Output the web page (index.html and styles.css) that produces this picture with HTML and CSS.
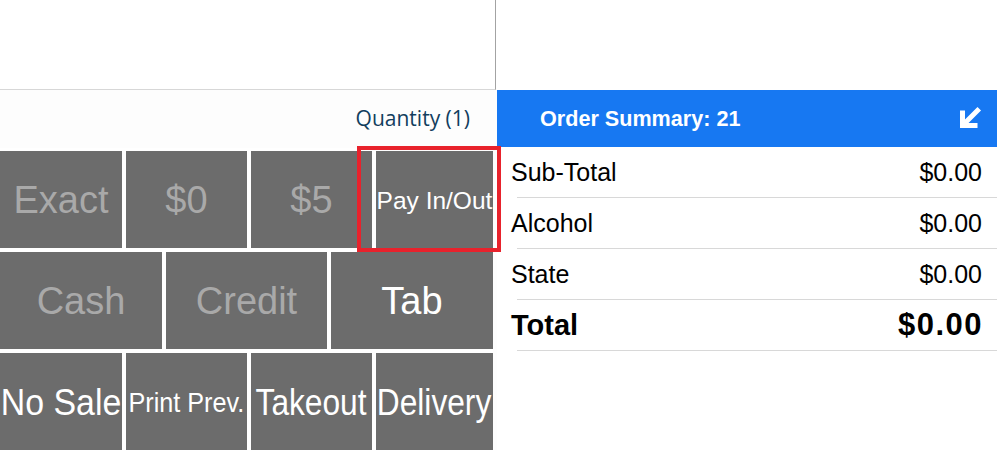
FILE: index.html
```html
<!DOCTYPE html>
<html>
<head>
<meta charset="utf-8">
<link rel="stylesheet" href="styles.css">
</head>
<body>
<div class="screen">
  <div class="top">
    <div class="top-left"></div>
    <div class="top-right"></div>
  </div>
  <div class="main">
    <div class="left">
      <div class="qty-row"><span class="qty">Quantity (1)</span></div>
      <div class="keys">
        <div class="row row4">
          <div class="key dim"><span>Exact</span></div>
          <div class="key dim"><span>$0</span></div>
          <div class="key dim"><span>$5</span></div>
          <div class="key on small marked"><span>Pay In/Out</span><div class="mark"></div></div>
        </div>
        <div class="row row3">
          <div class="key dim"><span>Cash</span></div>
          <div class="key dim"><span>Credit</span></div>
          <div class="key on"><span>Tab</span></div>
        </div>
        <div class="row row4">
          <div class="key on mid"><span class="sx94">No Sale</span></div>
          <div class="key on small2"><span class="sx90">Print Prev.</span></div>
          <div class="key on mid"><span class="sx88">Takeout</span></div>
          <div class="key on mid"><span class="sx88">Delivery</span></div>
        </div>
      </div>
    </div>
    <div class="right">
      <div class="summary-head">
        <span class="summary-title">Order Summary: 21</span>
        <svg class="collapse" width="24" height="24" viewBox="0 0 24 24">
          <path d="M19.5 4.5 L7 17" stroke="#fff" stroke-width="5" fill="none" stroke-linecap="square"/>
          <path d="M4.5 7 V19.5 H17" stroke="#fff" stroke-width="5" fill="none" stroke-linecap="square"/>
        </svg>
      </div>
      <div class="line"><span>Sub-Total</span><span>$0.00</span></div>
      <div class="line"><span>Alcohol</span><span>$0.00</span></div>
      <div class="line"><span>State</span><span>$0.00</span></div>
      <div class="line total"><span>Total</span><span class="amt">$0.00</span></div>
    </div>
  </div>
</div>
</body>
</html>
```

FILE: styles.css
```css
html, body {
  margin: 0;
  padding: 0;
  background: #ffffff;
}
body {
  font-family: "Liberation Sans", Arial, sans-serif;
  width: 997px;
  height: 457px;
  overflow: hidden;
}
.screen {
  display: flex;
  flex-direction: column;
  width: 997px;
}
.top {
  display: flex;
  height: 90px;
}
.top-left {
  width: 496px;
  border-right: 1px solid #a3a3a3;
  border-bottom: 1px solid #d7d7d7;
  box-sizing: border-box;
}
.top-right {
  flex: 1;
}
.main {
  display: flex;
}
.left {
  width: 497px;
  background: #fdfdfd;
  display: flex;
  flex-direction: column;
}
.qty-row {
  height: 57px;
  display: flex;
  align-items: center;
  justify-content: flex-end;
  padding: 0 27px 3px 0;
  box-sizing: border-box;
  margin-top: 1px;
}
.qty {
  font-family: "Open Sans", sans-serif;
  font-size: 21px;
  color: #123e5e;
}
.keys {
  display: flex;
  flex-direction: column;
  gap: 4px;
  padding-top: 3px;
  background: #ffffff;
  width: 493px;
}
.row {
  display: grid;
  height: 97px;
  gap: 4px;
}
.row4 {
  grid-template-columns: 122px 121px 121px 117px;
}
.row3 {
  grid-template-columns: 162px 161px 162px;
}
.key {
  position: relative;
  background: #6c6c6c;
  display: flex;
  align-items: center;
  justify-content: center;
  font-size: 38px;
  white-space: nowrap;
  padding-top: 2px;
  box-sizing: border-box;
}
.key span {
  display: inline-block;
}
.dim {
  color: #a9a9a9;
}
.on {
  color: #ffffff;
}
.small {
  font-size: 24.5px;
}
.small2 {
  font-size: 28px;
}
.mid {
  font-size: 36px;
}
.sx94 { transform: scaleX(0.94); }
.sx90 { transform: scaleX(0.9); }
.sx88 { transform: scaleX(0.88); }
.mark {
  position: absolute;
  left: -19px;
  right: -8px;
  top: -5px;
  bottom: -4px;
  border: 4px solid #e8222c;
}
.right {
  flex: 1;
  display: flex;
  flex-direction: column;
}
.summary-head {
  height: 57px;
  background: #1778f2;
  display: flex;
  align-items: center;
  justify-content: space-between;
  padding: 0 15px 0 43px;
}
.summary-title {
  color: #ffffff;
  font-weight: bold;
  font-size: 21.6px;
}
.collapse {
  display: block;
  margin-top: -1px;
}
.line {
  height: 50px;
  display: flex;
  align-items: center;
  justify-content: space-between;
  padding: 0 15px 1px 14px;
  font-size: 25px;
  color: #000000;
  background: linear-gradient(#d8d8d8, #d8d8d8) no-repeat 20px 100% / calc(100% - 20px) 1px;
}
.total {
  font-size: 29px;
  font-weight: bold;
}
.total .amt {
  font-size: 31px;
  letter-spacing: 1.5px;
  margin-right: -1px;
}
```
